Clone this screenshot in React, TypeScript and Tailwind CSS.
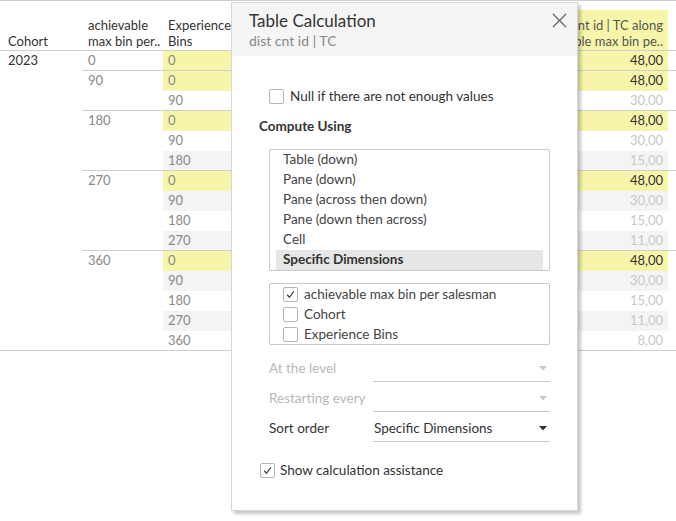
import { X } from 'lucide-react';

type Row = { e: string; v: string; hl?: boolean; band?: boolean };
type Group = { ach: string; rows: Row[] };

const groups: Group[] = [
  { ach: '0', rows: [{ e: '0', v: '48,00', hl: true }] },
  { ach: '90', rows: [{ e: '0', v: '48,00', hl: true }, { e: '90', v: '30,00' }] },
  {
    ach: '180',
    rows: [
      { e: '0', v: '48,00', hl: true },
      { e: '90', v: '30,00' },
      { e: '180', v: '15,00', band: true },
    ],
  },
  {
    ach: '270',
    rows: [
      { e: '0', v: '48,00', hl: true },
      { e: '90', v: '30,00', band: true },
      { e: '180', v: '15,00' },
      { e: '270', v: '11,00', band: true },
    ],
  },
  {
    ach: '360',
    rows: [
      { e: '0', v: '48,00', hl: true },
      { e: '90', v: '30,00', band: true },
      { e: '180', v: '15,00' },
      { e: '270', v: '11,00', band: true },
      { e: '360', v: '8,00' },
    ],
  },
];

function Check({ checked = false }: { checked?: boolean }) {
  return (
    <span className="flex h-[15px] w-[15px] shrink-0 items-center justify-center rounded-[2px] border border-[#b5b5b5] bg-white">
      {checked && (
        <svg width="11" height="11" viewBox="0 0 11 11" fill="none">
          <path d="M2.2 5.8 L4.4 8.3 L8.9 2.3" stroke="#444" strokeWidth="1.3" />
        </svg>
      )}
    </span>
  );
}

function Caret({ disabled }: { disabled?: boolean }) {
  return (
    <svg width="8" height="5" viewBox="0 0 8 5" className="mr-[3px]">
      <path d="M0 0 H8 L4 4.5 Z" fill={disabled ? '#c8c8c8' : '#333'} />
    </svg>
  );
}

function SelectRow({ label, value, disabled }: { label: string; value?: string; disabled?: boolean }) {
  return (
    <div className="flex h-[24px]">
      <div className={`w-[104px] leading-[20px] ${disabled ? 'text-[#b8b8b8]' : 'text-[#333]'}`}>{label}</div>
      <div className="flex w-[177px] items-start justify-between border-b border-[#c8c8c8] pl-[1px]">
        <span className="leading-[20px] text-[#333]">{value}</span>
        <span className="flex h-[20px] items-center">
          <Caret disabled={disabled} />
        </span>
      </div>
    </div>
  );
}

function Dialog() {
  const items = ['Table (down)', 'Pane (down)', 'Pane (across then down)', 'Pane (down then across)', 'Cell'];
  return (
    <div className="absolute left-[231px] top-[2px] z-10 flex h-[509px] w-[347px] flex-col border border-[#d6d6d6] bg-white text-[13.5px] shadow-[3px_3px_3px_rgba(0,0,0,0.22)]">
      <div className="relative h-[53px] shrink-0 bg-[#f5f5f5] pl-[17px]">
        <div className="pt-[6px] text-[17px] leading-[24px] text-[#333]">Table Calculation</div>
        <div className="text-[14px] leading-[16px] text-[#888]">dist cnt id | TC</div>
        <X className="absolute right-[5px] top-[5px] h-[25px] w-[25px] text-[#666]" strokeWidth={1.2} />
      </div>
      <div className="flex flex-col pl-[27px]">
        <div className="mt-[30px] flex h-[20px] items-center gap-[6px] pl-[10px] text-[#333]">
          <Check />
          <span>Null if there are not enough values</span>
        </div>
        <div className="mt-[10px] h-[20px] font-bold leading-[20px] text-[#333]">Compute Using</div>
        <div className="ml-[10px] mt-[13px] w-[281px] rounded-[2px] border border-[#c8c8c8]">
          {items.map((t) => (
            <div key={t} className="h-[20px] pl-[13px] leading-[19px] text-[#444]">
              {t}
            </div>
          ))}
          <div className="mx-[6px] h-[20px] bg-[#e6e6e6] pl-[7px] font-bold leading-[19px] text-[#333]">
            Specific Dimensions
          </div>
        </div>
        <div className="ml-[10px] mt-[12px] w-[281px] rounded-[2px] border border-[#c8c8c8]">
          {[
            ['achievable max bin per salesman', true],
            ['Cohort', false],
            ['Experience Bins', false],
          ].map(([t, c]) => (
            <div key={t as string} className="flex h-[20px] items-center gap-[6px] pl-[13px] text-[#444]">
              <Check checked={c as boolean} />
              <span>{t as string}</span>
            </div>
          ))}
        </div>
        <div className="ml-[10px] mt-[13px] flex flex-col gap-[6px]">
          <SelectRow label="At the level" disabled />
          <SelectRow label="Restarting every" disabled />
          <SelectRow label="Sort order" value="Specific Dimensions" />
        </div>
        <div className="mt-[18px] flex h-[20px] items-center gap-[5px] pl-[1px] text-[#333]">
          <Check checked />
          <span>Show calculation assistance</span>
        </div>
      </div>
    </div>
  );
}

export default function App() {
  return (
    <div
      className="relative h-[521px] w-[676px] overflow-hidden bg-white text-[13px]"
      style={{ fontFamily: 'Lato, "Liberation Sans", sans-serif' }}
    >
      {/* header */}
      <div className="flex h-[51px] whitespace-nowrap border-y border-[#cfcfcf] leading-[16px] text-[#333]">
        <div className="flex w-[82px] items-end pb-[1px] pl-[8px]">Cohort</div>
        <div className="flex w-[81px] items-end overflow-hidden pb-[1px] pl-[6px]">
          achievable
          <br />
          max bin per..
        </div>
        <div className="flex w-[70px] items-end overflow-hidden pb-[1px] pl-[5px]">
          Experience
          <br />
          Bins
        </div>
        <div className="flex-1" />
        <div className="mt-[9px] flex w-[100px] flex-col items-end justify-end bg-[#f6f5aa] pb-[1px] pr-[5px] text-[#555]">
          <span>dist cnt id | TC along</span>
          <span>achievable max bin pe..</span>
        </div>
        <div className="w-[8px]" />
      </div>
      {/* body */}
      <div className="flex border-b border-[#cfcfcf]">
        <div className="w-[82px] pl-[8px] leading-[19px] text-[#333]">2023</div>
        <div className="flex flex-1 flex-col">
          {groups.map((g, gi) => (
            <div key={g.ach} className={`flex ${gi < groups.length - 1 ? 'border-b border-[#cfcfcf]' : ''}`}>
              <div className="w-[81px] pl-[6px] leading-[19px] text-[#888]">{g.ach}</div>
              <div className="flex flex-1 flex-col">
                {g.rows.map((r, ri) => (
                  <div
                    key={r.e}
                    className={`flex ${ri === g.rows.length - 1 ? 'h-[19px]' : 'h-[20px]'}`}
                  >
                    <div className={`flex flex-1 leading-[19px] ${r.band ? 'bg-[#f4f4f4]' : ''}`}>
                      <div className={`w-[70px] pl-[5px] text-[#888] ${r.hl ? 'bg-[#f6f5aa]' : ''}`}>{r.e}</div>
                      <div className="flex-1" />
                      <div
                        className={`w-[100px] pr-[5px] text-right ${r.hl ? 'bg-[#f6f5aa] text-[#333]' : 'text-[#c8c8c8]'}`}
                      >
                        {r.v}
                      </div>
                    </div>
                    <div className="w-[8px]" />
                  </div>
                ))}
              </div>
            </div>
          ))}
        </div>
      </div>
      <Dialog />
    </div>
  );
}
